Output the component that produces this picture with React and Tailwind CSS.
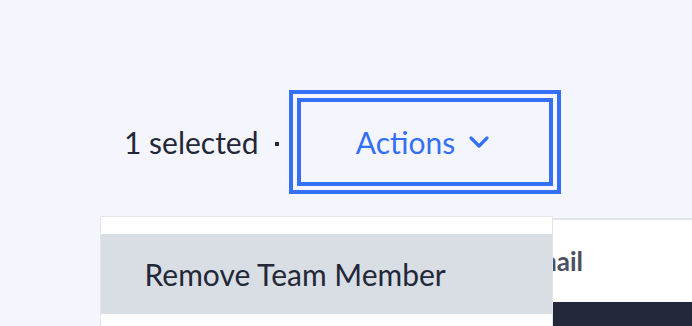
import { ChevronDown } from "lucide-react";

const font = { fontFamily: '"Lato", "Noto Sans", sans-serif' };

const App = () => {
  return (
    <div
      className="w-full h-[326px] overflow-hidden bg-[#f5f6fd] text-[#232838]"
      style={font}
    >
      {/* Selection toolbar */}
      <div className="pt-[98px] pl-[124px]">
        <div className="flex items-center">
          <span className="text-[30px] leading-none">1 selected</span>
          <span className="ml-[17px] mt-[4px] w-[4px] h-[4px] bg-[#232838]" />

          <div className="relative ml-[18px]">
            <button className="w-[256px] h-[88px] flex items-center justify-center gap-[8px] border-4 border-[#3470f6] outline-4 outline-offset-4 outline-[#3470f6] text-[#3470f6] text-[30px] leading-none">
              Actions
              <ChevronDown size={32} strokeWidth={2.4} />
            </button>

            {/* Actions dropdown menu */}
            <div className="absolute right-0 top-full mt-[30px] w-[453px] bg-white border border-[#e4e5ea] pt-[17px] pb-[40px] z-10">
              <div className="h-[80px] flex items-center pl-[43px] bg-[#d9dde4] text-[30px]">
                Remove Team Member
              </div>
            </div>
          </div>
        </div>
      </div>

      {/* Members table (behind menu) */}
      <div className="mt-[32px] ml-[124px] w-[900px] border-t-2 border-[#e3e4ea] bg-white">
        <div className="h-[82px] flex items-center">
          <div className="w-[459px] flex justify-end">
            <span className="text-[26px] font-bold text-[#4b5162]">Email</span>
          </div>
        </div>
        <div className="h-[80px] bg-[#23283b]" />
      </div>
    </div>
  );
};

export default App;
